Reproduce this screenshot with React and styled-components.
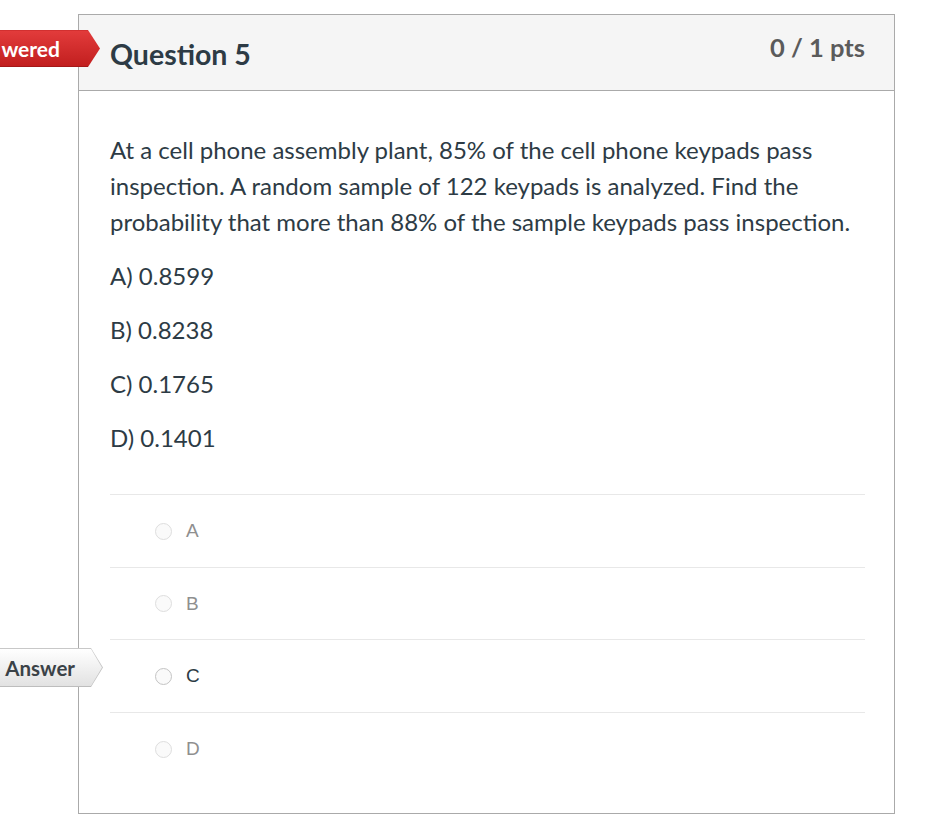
import React from "react";
import styled, { createGlobalStyle } from "styled-components";

const Global = createGlobalStyle`
  html, body { margin: 0; padding: 0; background: #fff; }
  body { font-family: Lato, "Open Sans", "Liberation Sans", sans-serif; color: #2d3b45; }
`;

const Page = styled.div`
  padding: 14px 0 0 78px;
  width: 934px;
  height: 832px;
  box-sizing: border-box;
  overflow: hidden;
`;

const Card = styled.div`
  position: relative;
  width: 817px;
  height: 800px;
  box-sizing: border-box;
  border: 1px solid #aaaaaa;
`;

const Header = styled.div`
  display: flex;
  justify-content: space-between;
  align-items: flex-start;
  height: 76px;
  box-sizing: border-box;
  background: #f5f5f5;
  border-bottom: 1px solid #aaaaaa;
  padding: 0 29px 0 31px;
`;

const Title = styled.h2`
  margin: 22px 0 0;
  font-size: 28.5px;
  line-height: 34px;
  font-weight: 700;
  color: #2d3b45;
`;

const Points = styled.div`
  margin-top: 17px;
  font-size: 25.5px;
  line-height: 30px;
  font-weight: 700;
  color: #5b5b5b;
`;

const Body = styled.div`
  padding: 41px 29px 0 31px;
`;

const Para = styled.p`
  margin: 0 0 18px;
  font-size: 24px;
  line-height: 36px;
  color: #2d3b45;
`;

const Answers = styled.div`
  margin-top: 38px;
`;

const Row = styled.label`
  display: flex;
  align-items: center;
  gap: 14px;
  height: ${(p) => p.$h}px;
  border-top: 1px solid #e8e8e8;
  padding-left: 45px;
`;

const Radio = styled.span`
  width: 15px;
  height: 15px;
  border-radius: 50%;
  border: 1.5px solid ${(p) => (p.$strong ? "#c4c4c4" : "#dedede")};
  background: #fafafa;
`;

const Letter = styled.span`
  font-family: "Liberation Sans", Arial, sans-serif;
  font-size: 19px;
  color: ${(p) => (p.$strong ? "#2d3b45" : "#8f8f8f")};
`;

const Badge = styled.div`
  position: absolute;
  left: -79px;
  top: ${(p) => p.$top}px;
  width: ${(p) => p.$w}px;
  height: ${(p) => p.$h}px;
  display: flex;
  align-items: center;
  justify-content: flex-end;
  padding-right: ${(p) => p.$pr}px;
  font-weight: 700;
  font-size: ${(p) => p.$fs}px;
  white-space: nowrap;
  box-sizing: border-box;
  color: ${(p) => (p.$red ? "#ffffff" : "#3b4247")};
  background: ${(p) =>
    p.$red
      ? "linear-gradient(#e23b3b, #c21f1f)"
      : "linear-gradient(#ffffff, #e2e2e2)"};
  border-top: 1px solid ${(p) => (p.$red ? "#d23030" : "#c8c8c8")};
  border-bottom: 1px solid ${(p) => (p.$red ? "#a51818" : "#bdbdbd")};
  &::after {
    content: "";
    position: absolute;
    left: 100%;
    top: -1px;
    bottom: -1px;
    width: 12px;
    clip-path: polygon(0 0, 100% 50%, 0 100%);
    background: ${(p) =>
      p.$red
        ? "linear-gradient(#e23b3b, #c21f1f)"
        : "linear-gradient(#c8c8c8, #bdbdbd)"};
  }
  &::before {
    content: "";
    display: ${(p) => (p.$red ? "none" : "block")};
    position: absolute;
    left: 100%;
    top: 0;
    bottom: 0;
    width: 11px;
    z-index: 1;
    clip-path: polygon(0 0, 100% 50%, 0 100%);
    background: linear-gradient(#ffffff, #e2e2e2);
  }
`;

const questionText =
  "At a cell phone assembly plant, 85% of the cell phone keypads pass inspection. A random sample of 122 keypads is analyzed. Find the probability that more than 88% of the sample keypads pass inspection.";

const options = ["A) 0.8599", "B) 0.8238", "C) 0.1765", "D) 0.1401"];
const rows = [
  { l: "A", h: 72 },
  { l: "B", h: 71 },
  { l: "C", h: 72 },
  { l: "D", h: 72 },
];

export default function App() {
  return (
    <>
      <Global />
      <Page>
        <Card>
          <Badge $red $top={15} $h={37} $w={88} $pr={28} $fs={21}>
            wered
          </Badge>
          <Badge $top={633} $h={39} $w={91} $pr={16} $fs={20.5}>
            Answer
          </Badge>
          <Header>
            <Title>Question 5</Title>
            <Points>0 / 1 pts</Points>
          </Header>
          <Body>
            <Para>{questionText}</Para>
            {options.map((o) => (
              <Para key={o}>{o}</Para>
            ))}
            <Answers>
              {rows.map(({ l, h }) => (
                <Row key={l} $h={h}>
                  <Radio $strong={l === "C"} />
                  <Letter $strong={l === "C"}>{l}</Letter>
                </Row>
              ))}
            </Answers>
          </Body>
        </Card>
      </Page>
    </>
  );
}
